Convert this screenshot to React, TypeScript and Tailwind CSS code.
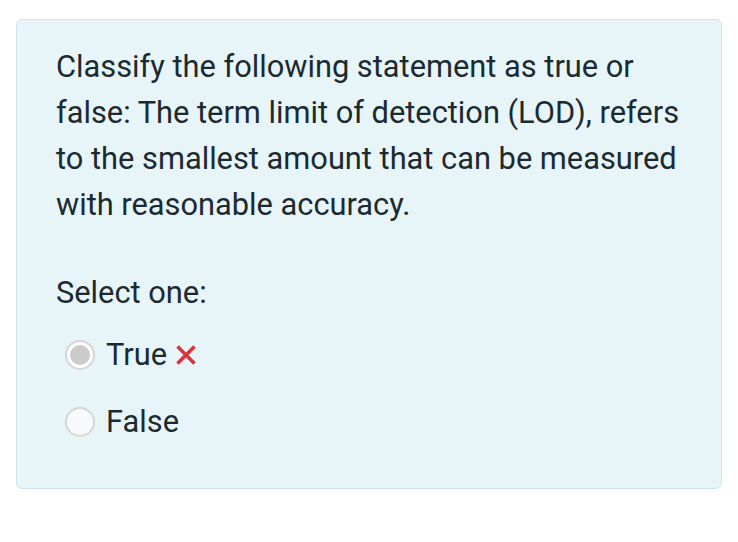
export default function App() {
  return (
    <div className="w-[738px] h-[542px] bg-white pt-[19px] px-[16px]" style={{ fontFamily: "Roboto, 'Noto Sans', sans-serif" }}>
      <div className="w-[706px] h-[470px] rounded-md border border-[#cde6ee] bg-[#e7f5f9] pl-[39px] pr-[30px] pt-[24px] text-[#1b2a30]">
        <p className="text-[30.8px] leading-[46px]">
          Classify the following statement as true or false: The term limit of detection (LOD), refers to the smallest amount that can be measured with reasonable accuracy.
        </p>
        <p className="mt-[42px] text-[30.8px] leading-[46px]">Select one:</p>

        <div className="mt-[16px] flex flex-col gap-[21px]">
          <label className="flex items-center h-[46px]">
            <span className="ml-[9px] w-[30px] h-[30px] rounded-full border-2 border-[#d6d6d6] bg-white flex items-center justify-center">
              <span className="w-[20px] h-[20px] rounded-full bg-[#cbcbcb]" />
            </span>
            <span className="ml-[11px] text-[30.8px]">True</span>
            <svg className="ml-[9px]" width="20" height="20" viewBox="0 0 20 20">
              <path d="M1.5 1.5 L18.5 18.5 M18.5 1.5 L1.5 18.5" stroke="#d9343c" strokeWidth="3.6" strokeLinecap="butt" />
            </svg>
          </label>
          <label className="flex items-center h-[46px]">
            <span className="ml-[9px] w-[30px] h-[30px] rounded-full border-2 border-[#d6d6d6] bg-[#f7f9fa]" />
            <span className="ml-[11px] text-[30.8px]">False</span>
          </label>
        </div>
      </div>
    </div>
  );
}
